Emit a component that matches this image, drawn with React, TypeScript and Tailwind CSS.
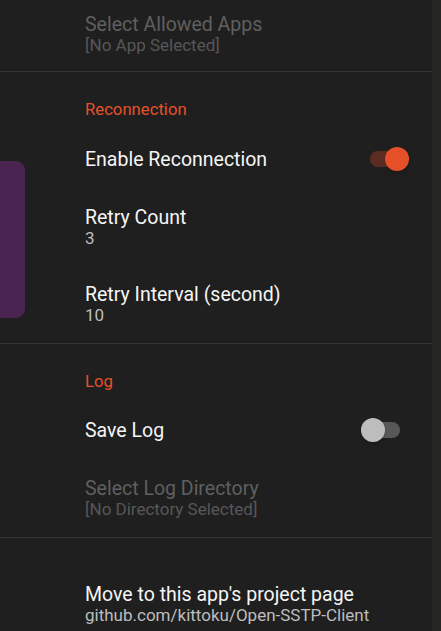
import React from 'react';

const font = { fontFamily: 'Roboto, "Noto Sans", sans-serif' };

function Toggle({ on }: { on: boolean }) {
  if (on) {
    return (
      <div className="relative mr-[23px] h-[24px] w-[39px]">
        <div className="absolute left-0 top-[4px] h-[16px] w-[39px] rounded-full bg-[#5b2d22]" />
        <div className="absolute right-0 top-0 h-[24px] w-[24px] rounded-full bg-[#e55028] shadow-md" />
      </div>
    );
  }
  return (
    <div className="relative mr-[32px] h-[24px] w-[39px]">
      <div className="absolute left-0 top-[4px] h-[16px] w-[39px] rounded-full bg-[#585858]" />
      <div className="absolute left-0 top-0 h-[24px] w-[24px] rounded-full bg-[#bdbdbd] shadow-md" />
    </div>
  );
}

function Title({ children, dim }: { children: React.ReactNode; dim?: boolean }) {
  return (
    <div className={`text-[19.5px] leading-[23px] ${dim ? 'text-[#5f5f5f]' : 'text-[#f5f5f5]'}`}>{children}</div>
  );
}

function Summary({ children, dim }: { children: React.ReactNode; dim?: boolean }) {
  return (
    <div className={`text-[17px] leading-[19px] ${dim ? 'text-[#575757]' : 'text-[#bdbdbd]'}`}>{children}</div>
  );
}

function Category({ children }: { children: React.ReactNode }) {
  return <div className="text-[16.7px] leading-[20px] text-[#e5502a]">{children}</div>;
}

function Divider() {
  return <div className="h-px bg-[#353535]" />;
}

export default function App() {
  return (
    <div className="relative flex h-[631px] w-[441px] overflow-hidden bg-[#1f1f1f]" style={font}>
      <div className="flex-1">
        {/* Allowed apps */}
        <div className="h-[71px] pl-[85px] pt-[13px]">
          <Title dim>Select Allowed Apps</Title>
          <Summary dim>[No App Selected]</Summary>
        </div>
        <Divider />

        {/* Reconnection */}
        <div className="pl-[85px] pt-[28px]">
          <Category>Reconnection</Category>
        </div>
        <div className="flex items-center justify-between pl-[85px] pt-[27px]">
          <Title>Enable Reconnection</Title>
          <Toggle on />
        </div>
        <div className="pl-[85px] pt-[35px]">
          <Title>Retry Count</Title>
          <Summary>3</Summary>
        </div>
        <div className="pl-[85px] pt-[35px]">
          <Title>Retry Interval (second)</Title>
          <Summary>10</Summary>
        </div>
        <div className="h-[18px]" />
        <Divider />

        {/* Log */}
        <div className="pl-[85px] pt-[28px]">
          <Category>Log</Category>
        </div>
        <div className="flex items-center justify-between pl-[85px] pt-[26px]">
          <Title>Save Log</Title>
          <Toggle on={false} />
        </div>
        <div className="pl-[85px] pt-[35px]">
          <Title dim>Select Log Directory</Title>
          <Summary dim>[No Directory Selected]</Summary>
        </div>
        <div className="h-[18px]" />
        <Divider />

        {/* Project page */}
        <div className="pl-[85px] pt-[45px]">
          <Title>Move to this app's project page</Title>
          <Summary>github.com/kittoku/Open-SSTP-Client</Summary>
        </div>
      </div>
      <div className="w-[9px] bg-[#262625]" />

      {/* edge handle */}
      <div className="absolute left-0 top-[161px] h-[157px] w-[25px] rounded-r-[9px] bg-[#4a2552]" />
    </div>
  );
}
